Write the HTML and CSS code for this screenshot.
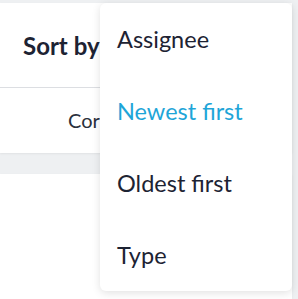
FILE: index.html
```html
<!DOCTYPE html>
<html>
<head>
<meta charset="utf-8">
<link rel="stylesheet" href="styles.css">
</head>
<body>
<div class="page">
  <section class="card top">
    <div class="head"><h2 class="title">Sort by</h2></div>
    <div class="sub"><span class="label">Correspondence</span></div>
  </section>
  <section class="card lower"></section>
</div>
<ul class="menu">
  <li class="item">Assignee</li>
  <li class="item active">Newest first</li>
  <li class="item">Oldest first</li>
  <li class="item">Type</li>
</ul>
</body>
</html>
```
FILE: styles.css
```css
html, body { margin: 0; padding: 0; }
body {
  width: 298px;
  height: 299px;
  overflow: hidden;
  background: #eef0f2;
  font-family: Lato, "Open Sans", sans-serif;
  color: #1d2333;
  position: relative;
}
.page {
  padding-top: 3px;
  display: flex;
  flex-direction: column;
  gap: 21px;
}
.card {
  background: #fff;
  width: 292px;
  box-shadow: 0 1px 2px rgba(0,0,0,0.06);
}
.top { height: 150px; display: flex; flex-direction: column; }
.head {
  height: 84px;
  border-bottom: 1px solid #dcdee2;
  display: flex;
  align-items: center;
  padding-left: 23px;
}
.title { margin: 0; font-size: 24px; font-weight: 700; }
.sub {
  margin: 20px 0 0 68px;
  width: 32px;
  overflow: hidden;
  white-space: nowrap;
}
.label { font-size: 20px; color: #2a303c; }
.lower { height: 130px; }
.menu {
  position: absolute;
  left: 100px;
  top: 3px;
  width: 192px;
  height: 288px;
  margin: 0;
  padding: 0;
  list-style: none;
  background: #fff;
  border-radius: 6px;
  box-shadow: 0 2px 8px rgba(0,0,0,0.12);
  display: flex;
  flex-direction: column;
}
.item {
  height: 72px;
  display: flex;
  align-items: center;
  padding-left: 17px;
  font-size: 23.5px;
  color: #1d2333;
}
.active { color: #1ea5d8; }
```
